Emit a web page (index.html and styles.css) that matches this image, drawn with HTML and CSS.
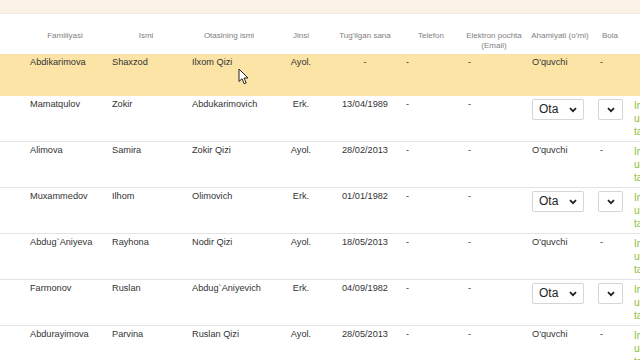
FILE: index.html
```html
<!DOCTYPE html>
<html lang="uz">
<head>
<meta charset="utf-8">
<title>O'quvchilar</title>
<link rel="stylesheet" href="styles.css">
</head>
<body>
<div class="topband"></div>
<table class="grid">
  <colgroup>
    <col class="c0"><col class="c1"><col class="c2"><col class="c3"><col class="c4"><col class="c5"><col class="c6"><col class="c7"><col class="c8"><col class="c9"><col class="c10">
  </colgroup>
  <thead>
    <tr>
      <th></th>
      <th>Familiyasi</th>
      <th>Ismi</th>
      <th>Otasining ismi</th>
      <th>Jinsi</th>
      <th>Tug'ilgan sana</th>
      <th>Telefon</th>
      <th>Elektron pochta (Email)</th>
      <th>Ahamiyati (o'rni)</th>
      <th>Bola</th>
      <th></th>
    </tr>
  </thead>
  <tbody>
    <tr class="hl">
      <td></td><td>Abdikarimova</td><td>Shaxzod</td><td class="cursor-cell">Ilxom Qizi<svg class="cursor" width="11" height="17" viewBox="0 0 11 17"><path d="M1 1 L1 13.5 L4 10.8 L6.2 15.8 L8.2 14.9 L6 10 L10 10 Z" fill="#fff" stroke="#222" stroke-width="1" stroke-linejoin="round"/></svg></td><td class="ct">Ayol.</td><td class="ct">-</td><td>-</td><td>-</td><td>O'quvchi</td><td>-</td><td></td>
    </tr>
    <tr>
      <td></td><td>Mamatqulov</td><td>Zokir</td><td>Abdukarimovich</td><td class="ct">Erk.</td><td class="ct">13/04/1989</td><td>-</td><td>-</td>
      <td><div class="sel wide"><span>Ota</span><svg width="8" height="6" viewBox="0 0 8 6"><path d="M1 1.2 L4 4.2 L7 1.2" fill="none" stroke="#222" stroke-width="1.8"/></svg></div></td>
      <td class="selcell"><div class="sel narrow"><svg width="8" height="6" viewBox="0 0 8 6"><path d="M1 1.2 L4 4.2 L7 1.2" fill="none" stroke="#222" stroke-width="1.8"/></svg></div></td>
      <td class="act">Inobatga<br>ulash<br>tasdiqlash</td>
    </tr>
    <tr>
      <td></td><td>Alimova</td><td>Samira</td><td>Zokir Qizi</td><td class="ct">Ayol.</td><td class="ct">28/02/2013</td><td>-</td><td>-</td><td>O'quvchi</td><td>-</td>
      <td class="act">Inobatga<br>ulash<br>tasdiqlash</td>
    </tr>
    <tr>
      <td></td><td>Muxammedov</td><td>Ilhom</td><td>Olimovich</td><td class="ct">Erk.</td><td class="ct">01/01/1982</td><td>-</td><td>-</td>
      <td><div class="sel wide"><span>Ota</span><svg width="8" height="6" viewBox="0 0 8 6"><path d="M1 1.2 L4 4.2 L7 1.2" fill="none" stroke="#222" stroke-width="1.8"/></svg></div></td>
      <td class="selcell"><div class="sel narrow"><svg width="8" height="6" viewBox="0 0 8 6"><path d="M1 1.2 L4 4.2 L7 1.2" fill="none" stroke="#222" stroke-width="1.8"/></svg></div></td>
      <td class="act">Inobatga<br>ulash<br>tasdiqlash</td>
    </tr>
    <tr>
      <td></td><td>Abdug`Aniyeva</td><td>Rayhona</td><td>Nodir Qizi</td><td class="ct">Ayol.</td><td class="ct">18/05/2013</td><td>-</td><td>-</td><td>O'quvchi</td><td>-</td>
      <td class="act">Inobatga<br>ulash<br>tasdiqlash</td>
    </tr>
    <tr>
      <td></td><td>Farmonov</td><td>Ruslan</td><td>Abdug`Aniyevich</td><td class="ct">Erk.</td><td class="ct">04/09/1982</td><td>-</td><td>-</td>
      <td><div class="sel wide"><span>Ota</span><svg width="8" height="6" viewBox="0 0 8 6"><path d="M1 1.2 L4 4.2 L7 1.2" fill="none" stroke="#222" stroke-width="1.8"/></svg></div></td>
      <td class="selcell"><div class="sel narrow"><svg width="8" height="6" viewBox="0 0 8 6"><path d="M1 1.2 L4 4.2 L7 1.2" fill="none" stroke="#222" stroke-width="1.8"/></svg></div></td>
      <td class="act">Inobatga<br>ulash<br>tasdiqlash</td>
    </tr>
    <tr>
      <td></td><td>Abdurayimova</td><td>Parvina</td><td>Ruslan Qizi</td><td class="ct">Ayol.</td><td class="ct">28/05/2013</td><td>-</td><td>-</td><td>O'quvchi</td><td>-</td>
      <td class="act">Inobatga<br>ulash<br>tasdiqlash</td>
    </tr>
  </tbody>
</table>
</body>
</html>
```
FILE: styles.css
```css
html, body {
  margin: 0;
  padding: 0;
  background: #fff;
  overflow: hidden;
  width: 640px;
  height: 360px;
}
body {
  font-family: "Liberation Sans", Arial, sans-serif;
  color: #333;
}
.topband {
  height: 13px;
  background: #fdf2e7;
  border-bottom: 1px solid #f3e9df;
}
.grid {
  border-collapse: collapse;
  table-layout: fixed;
  width: 726px;
}
.c0 { width: 24px; }
.c1 { width: 82px; }
.c2 { width: 80px; }
.c3 { width: 86px; }
.c4 { width: 58px; }
.c5 { width: 70px; }
.c6 { width: 62px; }
.c7 { width: 64px; }
.c8 { width: 68px; }
.c9 { width: 32px; }
.c10 { width: 100px; }
.grid th {
  height: 40px;
  box-sizing: border-box;
  padding: 17px 2px 0;
  vertical-align: top;
  font-weight: normal;
  font-size: 8px;
  line-height: 10px;
  color: #808080;
  text-align: center;
}
.grid td {
  padding: 2px 6px 2px;
  vertical-align: top;
  font-size: 9.2px;
  line-height: 13px;
  color: #333;
  text-align: left;
  white-space: nowrap;
  border-bottom: 1px solid #e3e3e3;
}
.grid tr.hl td {
  background: #fbe4a6;
  height: 37px;
  border-bottom-color: #fbe4a6;
}
.grid td.ct { text-align: center; }
.grid td.selcell { padding-left: 4px; padding-right: 0; }
.grid td.act {
  color: #8dc03c;
  font-size: 10px;
  line-height: 13px;
  padding-left: 8px;
  padding-top: 3px;
  padding-bottom: 3px;
}
.cursor-cell { position: relative; }
.cursor {
  position: absolute;
  left: 52px;
  top: 14px;
}
.sel {
  box-sizing: border-box;
  height: 21px;
  margin-top: 1px;
  border: 1px solid #d6d6d6;
  border-radius: 2px;
  background: #fff;
  display: flex;
  align-items: center;
  justify-content: space-between;
  box-shadow: 0 0 1px rgba(0,0,0,0.05);
}
.sel.wide {
  width: 52px;
  padding: 0 6px 0 6px;
}
.sel.wide span {
  font-size: 12px;
  color: #222;
}
.sel.narrow {
  width: 25px;
  justify-content: center;
}
```
